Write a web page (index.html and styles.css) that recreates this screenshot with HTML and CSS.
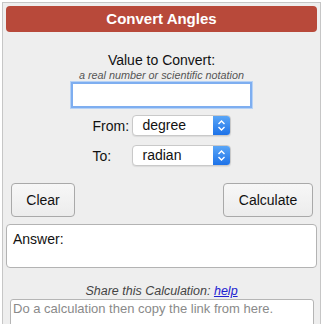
FILE: index.html
```html
<!DOCTYPE html>
<html>
<head>
  <meta charset="UTF-8">
  <title>Convert Angles</title>
  <link rel="stylesheet" href="styles.css">
</head>
<body>
  <div class="calc">
    <div class="calc-title">Convert Angles</div>

    <div class="value-label">Value to Convert:</div>
    <div class="hint">a real number or scientific notation</div>
    <div class="value-row">
      <input type="text" class="value-input">
    </div>

    <div class="units">
      <div class="unit-label">From:</div>
      <div class="picker">
        <span class="picker-text">degree</span>
        <span class="picker-arrow">
          <svg width="9" height="13" viewBox="0 0 9 13"><path d="M1.5 5 L4.5 2 L7.5 5 M1.5 8 L4.5 11 L7.5 8" fill="none" stroke="#fff" stroke-width="1.4"/></svg>
        </span>
      </div>
      <div class="unit-label">To:</div>
      <div class="picker">
        <span class="picker-text">radian</span>
        <span class="picker-arrow">
          <svg width="9" height="13" viewBox="0 0 9 13"><path d="M1.5 5 L4.5 2 L7.5 5 M1.5 8 L4.5 11 L7.5 8" fill="none" stroke="#fff" stroke-width="1.4"/></svg>
        </span>
      </div>
    </div>

    <div class="actions">
      <button class="btn btn-clear">Clear</button>
      <button class="btn btn-calc">Calculate</button>
    </div>

    <div class="answer">Answer:</div>

    <div class="share">Share this Calculation: <a href="#">help</a></div>
    <textarea class="share-link" placeholder="Do a calculation then copy the link from here."></textarea>
  </div>
</body>
</html>
```

FILE: styles.css
```css
body {
  margin: 0;
  background: #fff;
  font-family: "Liberation Sans", Arial, sans-serif;
  color: #111;
}
.calc {
  margin: 2px 3px 0 2px;
  height: 330px;
  padding: 3px 3px 0 3px;
  background: #eeeeee;
  border: 1px solid #c6c6c6;
  border-bottom: none;
}
.calc-title {
  height: 26px;
  line-height: 26px;
  background: #b8493a;
  border-radius: 4px;
  color: #fff;
  font-weight: bold;
  font-size: 15px;
  text-align: center;
}
.value-label {
  margin-top: 19px;
  font-size: 14px;
  line-height: 18px;
  text-align: center;
}
.hint {
  font-size: 10.8px;
  line-height: 13px;
  font-style: italic;
  color: #555;
  text-align: center;
}
.value-row {
  text-align: center;
}
.value-input {
  box-sizing: border-box;
  width: 181px;
  height: 26px;
  margin: 0;
  border: 2px solid #7eaef0;
  outline: 1px solid #b6d2f6;
  background: #fff;
  vertical-align: top;
}
.units {
  display: grid;
  grid-template-columns: 39px 99px;
  row-gap: 9px;
  justify-content: center;
  align-items: center;
  margin-top: 7px;
  font-size: 14px;
}
.picker {
  box-sizing: border-box;
  display: flex;
  height: 21px;
  background: #fff;
  border: 1px solid #c9c9c9;
  border-radius: 4px;
  overflow: hidden;
  box-shadow: 0 1px 1px rgba(0,0,0,0.08);
}
.picker-text {
  flex: 1;
  padding-left: 10px;
  line-height: 19px;
}
.picker-arrow {
  width: 17px;
  display: flex;
  align-items: center;
  justify-content: center;
  background: linear-gradient(#5aa6f7, #1d72e8);
}
.actions {
  display: flex;
  justify-content: space-between;
  margin: 17px 4px 0 5px;
}
.btn {
  height: 34px;
  background: linear-gradient(#f7f7f7, #ececec);
  border: 1px solid #a9a9a9;
  border-radius: 4px;
  font-family: inherit;
  font-size: 14px;
  color: #111;
  padding: 0;
}
.btn-clear {
  width: 64px;
}
.btn-calc {
  width: 90px;
}
.answer {
  box-sizing: border-box;
  height: 44px;
  margin: 7px 0 0 0;
  padding: 6px 6px;
  background: #fff;
  border: 1px solid #b3b3b3;
  border-radius: 4px;
  font-size: 14px;
  line-height: 16px;
}
.share {
  margin-top: 15px;
  font-size: 12.5px;
  line-height: 16px;
  font-style: italic;
  color: #444;
  text-align: center;
}
.share a {
  color: #2020d0;
}
.share-link {
  display: block;
  box-sizing: border-box;
  width: 304px;
  height: 40px;
  margin: 0 0 0 4px;
  padding: 1px 2px;
  border: 1px solid #b5b5b5;
  border-radius: 3px;
  background: #fff;
  font-family: inherit;
  font-size: 13px;
  resize: none;
}
.share-link::placeholder {
  color: #8a8a8a;
}
```
